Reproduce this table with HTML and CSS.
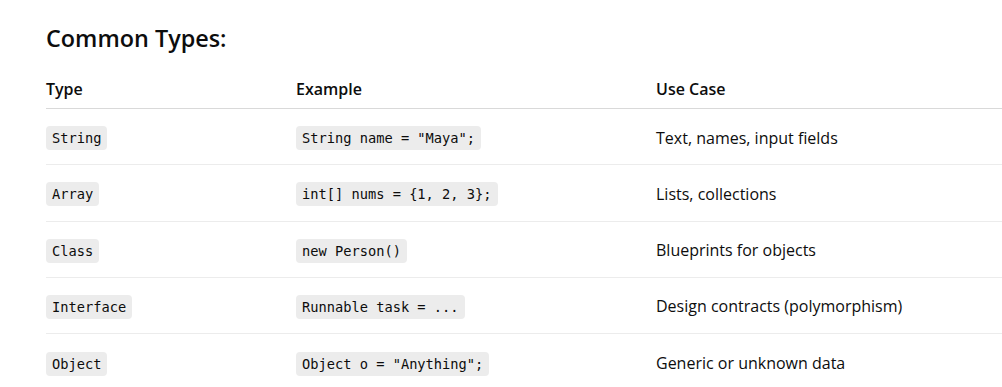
FILE: index.html
```html
<!DOCTYPE html>
<html lang="en">
<head>
<meta charset="utf-8">
<title>Common Types</title>
<link rel="stylesheet" href="styles.css">
</head>
<body>
<main class="content">
  <h3 class="title">Common Types:</h3>
  <div class="table">
    <div class="row head">
      <div class="cell">Type</div>
      <div class="cell">Example</div>
      <div class="cell">Use Case</div>
    </div>
    <div class="row">
      <div class="cell"><code>String</code></div>
      <div class="cell"><code>String name = "Maya";</code></div>
      <div class="cell">Text, names, input fields</div>
    </div>
    <div class="row">
      <div class="cell"><code>Array</code></div>
      <div class="cell"><code>int[] nums = {1, 2, 3};</code></div>
      <div class="cell">Lists, collections</div>
    </div>
    <div class="row">
      <div class="cell"><code>Class</code></div>
      <div class="cell"><code>new Person()</code></div>
      <div class="cell">Blueprints for objects</div>
    </div>
    <div class="row">
      <div class="cell"><code>Interface</code></div>
      <div class="cell"><code>Runnable task = ...</code></div>
      <div class="cell">Design contracts (polymorphism)</div>
    </div>
    <div class="row last">
      <div class="cell"><code>Object</code></div>
      <div class="cell"><code>Object o = "Anything";</code></div>
      <div class="cell">Generic or unknown data</div>
    </div>
  </div>
</main>
</body>
</html>
```

FILE: styles.css
```css
html, body {
  margin: 0;
  padding: 0;
  background: #ffffff;
}
body {
  font-family: "Open Sans", "Noto Sans", sans-serif;
  color: #0d0d0d;
  font-size: 16px;
}
.content {
  padding: 22px 0 0 46px;
}
.title {
  margin: 0 0 23px 0;
  font-size: 23.4px;
  font-weight: 600;
  line-height: 32px;
}
.table {
  display: flex;
  flex-direction: column;
}
.row {
  box-sizing: border-box;
  display: grid;
  grid-template-columns: 250px 360px 1fr;
  align-items: center;
  height: 56.25px;
  padding-top: 2px;
  border-bottom: 1px solid #ececec;
}
.row.head {
  height: 32px;
  padding-top: 0;
  align-items: start;
  font-weight: 600;
  border-bottom-color: #d9d9d9;
}
.row.last {
  border-bottom: none;
}
.cell {
  line-height: 24px;
  white-space: nowrap;
}
code {
  font-family: "DejaVu Sans Mono", monospace;
  font-size: 13.7px;
  background: #ececec;
  border-radius: 4px;
  padding: 4px 6px;
}
```
